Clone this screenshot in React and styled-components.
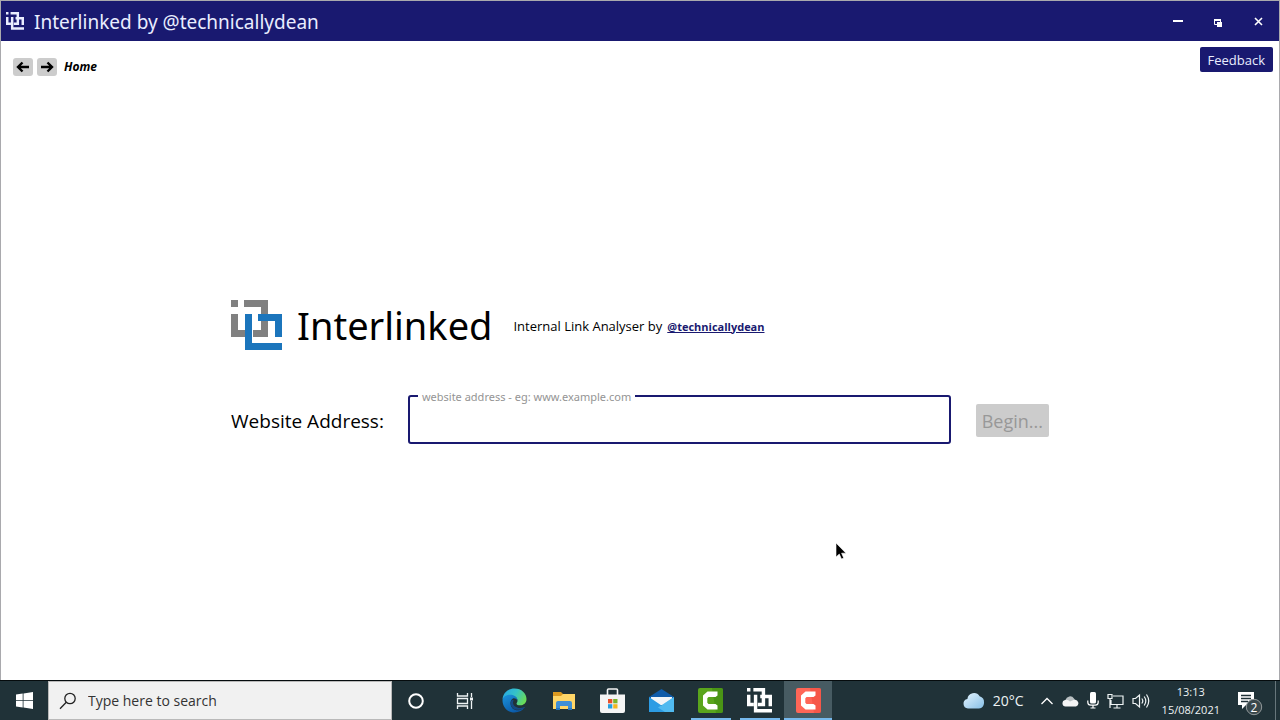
import React, { useState } from "react";
import styled, { createGlobalStyle, css } from "styled-components";

const GlobalStyle = createGlobalStyle`
    * {
        box-sizing: border-box;
    }
    body {
        margin: 0;
        background-color: white;
        color: black;
        font-family: "Open Sans", "Noto Sans", sans-serif;
    }
    button, input {
        font-family: inherit;
    }
`

const Desktop = styled.div`
    display: flex;
    flex-direction: column;
    height: 100vh;
    overflow: hidden;
`

/* ---------- application window ---------- */

const AppWindow = styled.div`
    flex: 1;
    display: flex;
    flex-direction: column;
    border: 1px solid #a9a9ad;
    border-bottom: none;
`
const TitleBar = styled.header`
    height: 40px;
    display: flex;
    align-items: center;
    padding: 0 1px 0 5px;
    background-color: #191970;
    color: #e9edff;
`
const TitleText = styled.h1`
    flex: 1;
    margin: 0 0 0 10px;
    padding-top: 2px;
    font-size: 19px;
    line-height: 28px;
    font-weight: 400;
    font-family: "Noto Sans", sans-serif;
`
const WindowButton = styled.button`
    display: flex;
    align-items: center;
    justify-content: center;
    width: 40px;
    height: 40px;
    padding: 0;
    border: none;
    background: none;
    color: white;
`
const ToolRow = styled.nav`
    display: flex;
    justify-content: space-between;
    align-items: flex-start;
    padding: 6px 6px 0 12px;
`
const Breadcrumb = styled.div`
    display: flex;
    align-items: center;
    gap: 4px;
    padding-top: 10px;
`
const NavButton = styled.button`
    display: flex;
    align-items: center;
    justify-content: center;
    width: 20px;
    height: 18px;
    padding: 0;
    border: none;
    border-radius: 3px;
    background-color: #cccccc;
`
const PageName = styled.span`
    margin-left: 3px;
    font-size: 12px;
    line-height: 20px;
    font-weight: 700;
    font-style: italic;
`
const FeedbackButton = styled.button`
    height: 25px;
    padding: 0 8px;
    border: none;
    border-radius: 2px;
    background-color: #191970;
    color: #e9edff;
    font-size: 13px;
    line-height: 20px;
`

const Main = styled.main`
    flex: 1;
    display: flex;
    flex-direction: column;
    align-items: center;
    justify-content: center;
    padding-bottom: 14px;
`
const Panel = styled.div`
    width: 64%;
`
const Brand = styled.div`
    display: flex;
    align-items: center;
`
const BrandName = styled.h2`
    margin: 0 0 0 15px;
    font-size: 38px;
    line-height: 52px;
    font-weight: 400;
    font-family: "Noto Sans", sans-serif;
`
const Tagline = styled.p`
    margin: 0 0 0 21px;
    padding-top: 2px;
    font-size: 13px;
    line-height: 20px;
`
const AuthorLink = styled.a`
    margin-left: 5px;
    color: #191970;
    font-size: 11px;
    font-weight: 700;
`
const AddressForm = styled.form`
    display: flex;
    align-items: center;
    margin-top: 46px;
`
const AddressLabel = styled.label`
    font-size: 19px;
    line-height: 28px;
`
/* pulled up so that the row centres on the box and not on the legend */
const AddressField = styled.fieldset`
    flex: 1;
    min-width: 0;
    height: 58px;
    margin: -11px 25px 0 24px;
    padding: 0 8px;
    border: 2px solid #191970;
    border-radius: 3px;
`
const AddressHint = styled.legend`
    padding: 2px 4px 0;
    font-size: 11px;
    line-height: 18px;
    font-family: "Noto Sans", sans-serif;
    color: #949494;
`
const AddressInput = styled.input`
    display: block;
    width: 100%;
    height: 34px;
    padding: 0 4px;
    border: none;
    outline: none;
    background: none;
    font-size: 19px;
`
const BeginButton = styled.button`
    height: 33px;
    padding: 0 6px;
    border: none;
    border-radius: 2px;
    background-color: #cccccc;
    color: #989898;
    font-size: 18px;
    line-height: 28px;
`
const Pointer = styled.svg`
    position: absolute;
    left: 835px;
    top: 542px;
`

/* ---------- taskbar ---------- */

const Taskbar = styled.footer`
    display: flex;
    height: 40px;
    border-top: 1px solid #050b0d;
    background-color: #203238;
    color: #eef3f4;
`
const TaskButton = styled.button`
    display: flex;
    align-items: center;
    justify-content: center;
    width: ${props => props.$width || 49}px;
    padding: 0;
    border: none;
    background-color: ${props => props.$active ? "#475b62" : "transparent"};
    color: inherit;
    ${props => props.$running && css`
        background-image: linear-gradient(#76b9ed, #76b9ed);
        background-size: ${props.$active ? "100%" : "40px"} 2px;
        background-position: bottom center;
        background-repeat: no-repeat;
    `}
`
const SearchBox = styled.label`
    display: flex;
    align-items: center;
    gap: 11px;
    width: 344px;
    padding: 0 10px;
    border: 1px solid #b9b9b9;
    background-color: #f1f1f1;
`
const SearchInput = styled.input`
    flex: 1;
    min-width: 0;
    padding: 0;
    border: none;
    outline: none;
    background: none;
    font-size: 14px;
    line-height: 20px;
    &::placeholder {
        color: #333333;
        opacity: 1;
    }
`
const Tray = styled.div`
    display: flex;
    align-items: center;
    margin-left: auto;
`
const Weather = styled.div`
    display: flex;
    align-items: center;
    gap: 8px;
    margin-right: 16px;
    font-size: 14px;
    line-height: 20px;
`
const TrayIcons = styled.div`
    display: flex;
    align-items: center;
    gap: 8px;
`
const Clock = styled.time`
    display: flex;
    flex-direction: column;
    align-items: center;
    margin: 0 17px 0 12px;
    font-size: 11px;
    line-height: 18px;
`
const ShowDesktop = styled.button`
    width: 5px;
    height: 39px;
    margin-left: 12px;
    padding: 0;
    border: none;
    border-left: 1px solid #67767b;
    background: none;
`

const LinkLogo = ({ size, back, front }) => (
    <svg width={size} height={size} viewBox="0 0 51 51" aria-hidden="true">
        <path fill={back} d="M0 0h7v7H0zM13 0h24v37H22v-7h8V7H13zM0 14h7v16h7v7H0z" />
        <path fill={front} d="M14 14h7v29h30v7H14zM27 14h24v23h-7V21H27z" />
    </svg>
)

const Arrow = ({ flip }) => (
    <svg width="14" height="14" viewBox="0 0 14 14" fill="none" stroke="black" strokeWidth="2.400" aria-hidden="true">
        <path d={flip ? "M1 7h11M7.500 2.500l4.500 4.500-4.500 4.500" : "M13 7H2M6.500 2.500L2 7l4.500 4.500"} />
    </svg>
)

const StartIcon = () => (
    <svg width="17" height="17" viewBox="0 0 17 17" fill="white" aria-hidden="true">
        <path d="M0 2.500L6.700 1.500V8H0zM7.500 1.400L17 0v8H7.500zM0 8.800h6.700v6.600L0 14.500zM7.500 8.800H17V17l-9.500-1.400z" />
    </svg>
)

const SearchIcon = () => (
    <svg width="18" height="18" viewBox="0 0 18 18" fill="none" stroke="#222" strokeWidth="1.300" aria-hidden="true">
        <circle cx="11" cy="6.500" r="5.200" />
        <path d="M7.300 10.300L1 16.800" />
    </svg>
)

const TaskViewIcon = () => (
    <svg width="18" height="18" viewBox="0 0 18 18" fill="none" stroke="#eef3f4" strokeWidth="1.300" aria-hidden="true">
        <path d="M1.500 1v3h10V1M1.500 17v-3h10v3M1.500 6.500h10v5h-10zM15.500 1v4M15.500 9v8" />
        <path fill="#eef3f4" stroke="none" d="M14 5.500h3v3h-3z" />
    </svg>
)

const EdgeIcon = () => (
    <svg width="25" height="25" viewBox="0 0 25 25" aria-hidden="true">
        <defs>
            <linearGradient id="edgeTop" x1="0" x2="1" y1="0.200" y2="0.600">
                <stop offset="0" stopColor="#27a7e4" />
                <stop offset="0.500" stopColor="#35c3c8" />
                <stop offset="1" stopColor="#6bdc55" />
            </linearGradient>
            <linearGradient id="edgeLow" x1="0" x2="0.600" y1="0" y2="1">
                <stop offset="0" stopColor="#1b93dc" />
                <stop offset="1" stopColor="#0b59a7" />
            </linearGradient>
        </defs>
        <path fill="url(#edgeTop)" d="M.500 11.500C1 5 6 .500 12.500.500c7 0 12 5 12 10.500 0 4-3 6.300-6.300 6.300-2.700 0-4-1-3.600-2 .6-1 .9-1.600.9-2.700 0-3-3-5.200-6.900-5.200-4.500 0-7.600 2.500-8.100 4.100z" />
        <path fill="url(#edgeLow)" d="M.500 12.500C.500 9 4 6.700 8 6.700c4.500 0 7.500 2.600 7.500 5.500-1-1.300-2.200-2-3.500-2-2 0-3.500 2.500-3.500 5 0 5 4.500 8 9.500 6.800 1.500-.4 3-1.100 4-1.900C20 23 16.500 24.500 12.500 24.500 5.500 24.500.500 19 .500 12.500z" />
        <path fill="#154a86" d="M9.800 12C8 14 8.300 17 10 19.200c2.700 3.300 8.300 3.500 12.600.5.500-.4.200-.8-.3-.6-5.500 2.400-11.300-.3-11.300-4.600 0-1 .3-1.700.8-2.300z" />
    </svg>
)

const FolderIcon = () => (
    <svg width="22" height="19" viewBox="0 0 22 19" aria-hidden="true">
        <path fill="#dc9a20" d="M0 1h8l2 2h11v4H0z" />
        <path fill="#ffd667" d="M0 5h8l2-2h12v15H0z" />
        <path fill="#3f8fd6" d="M3 19v-7q0-2 2-2h12q2 0 2 2v7h-4v-4H7v4z" />
        <path fill="#2675bd" d="M3 17h4v2H3zM15 17h4v2h-4z" />
    </svg>
)

const StoreIcon = () => (
    <svg width="25" height="25" viewBox="0 0 25 25" aria-hidden="true">
        <path fill="none" stroke="#f5f5f5" strokeWidth="1.600" d="M7.500 7V2q0-1 1-1h8q1 0 1 1v5" />
        <path fill="#f5f5f5" d="M0 6.500h25V23q0 2-2 2H2q-2 0-2-2z" />
        <path fill="#e9502b" d="M8 11h4.300v4.300H8z" />
        <path fill="#7cb52b" d="M13.200 11h4.300v4.300h-4.300z" />
        <path fill="#259fe0" d="M8 16.200h4.300v4.300H8z" />
        <path fill="#f6b51e" d="M13.200 16.200h4.300v4.300h-4.300z" />
    </svg>
)

const MailIcon = () => (
    <svg width="25" height="23" viewBox="0 0 25 23" aria-hidden="true">
        <path fill="#0f5ba9" d="M0 8L12.500 0 25 8v4H0z" />
        <path fill="#f2f5f8" d="M2 8h21v8H2z" />
        <path fill="#2c9ce4" d="M0 8l12.500 8.500L25 8v15H0z" />
        <path fill="#5fc8f5" d="M25 8L9 18.500 16 23h9z" opacity="0.700" />
    </svg>
)

const CamtasiaIcon = ({ from, to }) => (
    <svg width="25" height="25" viewBox="0 0 25 25" aria-hidden="true">
        <rect width="25" height="25" rx="2" fill={from} />
        <path fill={to} d="M14 0h9q2 0 2 2v21q0 2-2 2h-5z" opacity="0.600" />
        <path fill="white" d="M19.500 3.500v4l-2 1.500h-7L9.300 10.200v4.600l1.200 1.200h7l2 1.500v4H9.500L5 17.500v-10l4.500-4z" />
    </svg>
)

const WeatherIcon = () => (
    <svg width="22" height="17" viewBox="0 0 22 17" aria-hidden="true">
        <defs>
            <linearGradient id="cloud" x1="0" x2="1" y1="0" y2="1">
                <stop offset="0" stopColor="#e5f5ff" />
                <stop offset="1" stopColor="#87bfe6" />
            </linearGradient>
        </defs>
        <path fill="url(#cloud)" d="M5 16.500a4.800 4.800 0 0 1-.6-9.500A6.600 6.600 0 0 1 16.600 4.300 6.300 6.300 0 0 1 16 16.500z" />
    </svg>
)

const OneDriveIcon = () => (
    <svg width="17" height="12" viewBox="0 0 17 12" aria-hidden="true">
        <path fill="#b9c0c2" d="M3.500 5A4.700 4.700 0 0 1 12 3.500L15 8H2z" />
        <path fill="#f4f4f4" d="M3.500 11.500A3.300 3.300 0 0 1 3 5q3-.7 5 1.500l4-1.700A3.500 3.500 0 0 1 14 11.500z" />
    </svg>
)

const MicIcon = () => (
    <svg width="12" height="17" viewBox="0 0 12 17" aria-hidden="true">
        <rect x="3" width="6" height="11.500" rx="1.500" fill="white" />
        <path fill="none" stroke="white" strokeWidth="1.200" d="M.800 8.500v1.700q0 3 3 3h4.400q3 0 3-3V8.500M6 13v3M3.500 16h5" />
    </svg>
)

const NetworkIcon = () => (
    <svg width="17" height="16" viewBox="0 0 17 16" fill="none" stroke="#eef3f4" strokeWidth="1.200" aria-hidden="true">
        <path d="M6 3h10v8.500H4V7M10 11.500V15M6.500 15h7M1 1.500h4v4H1zM3 5.500V15" />
    </svg>
)

const VolumeIcon = () => (
    <svg width="18" height="16" viewBox="0 0 18 16" fill="none" stroke="#eef3f4" strokeWidth="1.200" aria-hidden="true">
        <path d="M1 5.500h2.500L7.500 2v12L3.500 10.500H1zM9.800 5.500q2 2.500 0 5M12.200 3.500q3.200 4.500 0 9M14.500 1.500q4.500 6.500 0 13" />
    </svg>
)

const NotificationIcon = () => (
    <svg width="26" height="30" viewBox="0 -4 26 30" aria-hidden="true">
        <path fill="white" d="M1 2h16v13H9l-4 4v-4H1z" />
        <path stroke="#203238" strokeWidth="1.300" d="M4 5.500h10M4 8.500h10M4 11.500h7" />
        <circle cx="17" cy="17" r="7.700" fill="#39474b" stroke="#92999b" />
        <text x="17" y="21.500" fill="white" fontSize="12" textAnchor="middle">2</text>
    </svg>
)

const App = () => {

    const [address, setAddress] = useState("")

    return (
        <Desktop>
            <GlobalStyle />
            <AppWindow>
                <TitleBar>
                    <LinkLogo size={18} back="#e9edff" front="#e9edff" />
                    <TitleText>Interlinked by @technicallydean</TitleText>
                    <WindowButton aria-label="Minimise">
                        <svg width="10" height="10" viewBox="0 0 10 10"><path fill="white" d="M0 4h10v2H0z" /></svg>
                    </WindowButton>
                    <WindowButton aria-label="Restore">
                        <svg width="10" height="14" viewBox="0 0 10 14">
                            <path fill="none" stroke="white" d="M4 10.500H1.500v-5h6V8" />
                            <path fill="white" d="M1 5h7v2H1zM4 8h5v5H4z" />
                        </svg>
                    </WindowButton>
                    <WindowButton aria-label="Close">
                        <svg width="9" height="9" viewBox="0 0 9 9"><path stroke="white" strokeWidth="1.600" d="M1 1l7 7M8 1L1 8" /></svg>
                    </WindowButton>
                </TitleBar>
                <ToolRow>
                    <Breadcrumb>
                        <NavButton aria-label="Back"><Arrow /></NavButton>
                        <NavButton aria-label="Forward"><Arrow flip /></NavButton>
                        <PageName>Home</PageName>
                    </Breadcrumb>
                    <FeedbackButton>Feedback</FeedbackButton>
                </ToolRow>
                <Main>
                    <Panel>
                        <Brand>
                            <LinkLogo size={51} back="#808080" front="#1b75bc" />
                            <BrandName>Interlinked</BrandName>
                            <Tagline>
                                Internal Link Analyser by
                                <AuthorLink href="#technicallydean">@technicallydean</AuthorLink>
                            </Tagline>
                        </Brand>
                        <AddressForm onSubmit={e => e.preventDefault()}>
                            <AddressLabel htmlFor="address">Website Address:</AddressLabel>
                            <AddressField>
                                <AddressHint>website address - eg: www.example.com</AddressHint>
                                <AddressInput id="address" value={address} onChange={e => setAddress(e.target.value)} />
                            </AddressField>
                            <BeginButton disabled={!address}>Begin...</BeginButton>
                        </AddressForm>
                    </Panel>
                </Main>
            </AppWindow>

            <Taskbar>
                <TaskButton $width={48} aria-label="Start"><StartIcon /></TaskButton>
                <SearchBox>
                    <SearchIcon />
                    <SearchInput aria-label="Search" placeholder="Type here to search" />
                </SearchBox>
                <TaskButton $width={48} aria-label="Cortana">
                    <svg width="18" height="18" viewBox="0 0 18 18"><circle cx="9" cy="9" r="6.800" fill="none" stroke="white" strokeWidth="2" /></svg>
                </TaskButton>
                <TaskButton aria-label="Task view"><TaskViewIcon /></TaskButton>
                <TaskButton $width={50} aria-label="Edge"><EdgeIcon /></TaskButton>
                <TaskButton aria-label="File Explorer"><FolderIcon /></TaskButton>
                <TaskButton aria-label="Store"><StoreIcon /></TaskButton>
                <TaskButton aria-label="Mail"><MailIcon /></TaskButton>
                <TaskButton $running aria-label="Camtasia"><CamtasiaIcon from="#5aa51c" to="#3f8a10" /></TaskButton>
                <TaskButton $running aria-label="Interlinked"><LinkLogo size={25} back="white" front="white" /></TaskButton>
                <TaskButton $width={48} $running $active aria-label="Camtasia Recorder"><CamtasiaIcon from="#ff6657" to="#f04c40" /></TaskButton>
                <Tray>
                    <Weather><WeatherIcon />20°C</Weather>
                    <TrayIcons>
                        <svg width="14" height="10" viewBox="0 0 14 10" fill="none" stroke="white" strokeWidth="1.300"><path d="M1.500 8L7 2.500 12.500 8" /></svg>
                        <OneDriveIcon />
                        <MicIcon />
                        <NetworkIcon />
                        <VolumeIcon />
                    </TrayIcons>
                    <Clock><span>13:13</span><span>15/08/2021</span></Clock>
                    <NotificationIcon />
                    <ShowDesktop aria-label="Show desktop" />
                </Tray>
            </Taskbar>

            <Pointer width="12" height="18" viewBox="0 0 12 18" aria-hidden="true">
                <path fill="black" stroke="white" strokeWidth="0.600" d="M1 1v14l3.300-3 2.200 5 2.200-1-2.100-4.800H11z" />
            </Pointer>
        </Desktop>
    )
}


export default App;
